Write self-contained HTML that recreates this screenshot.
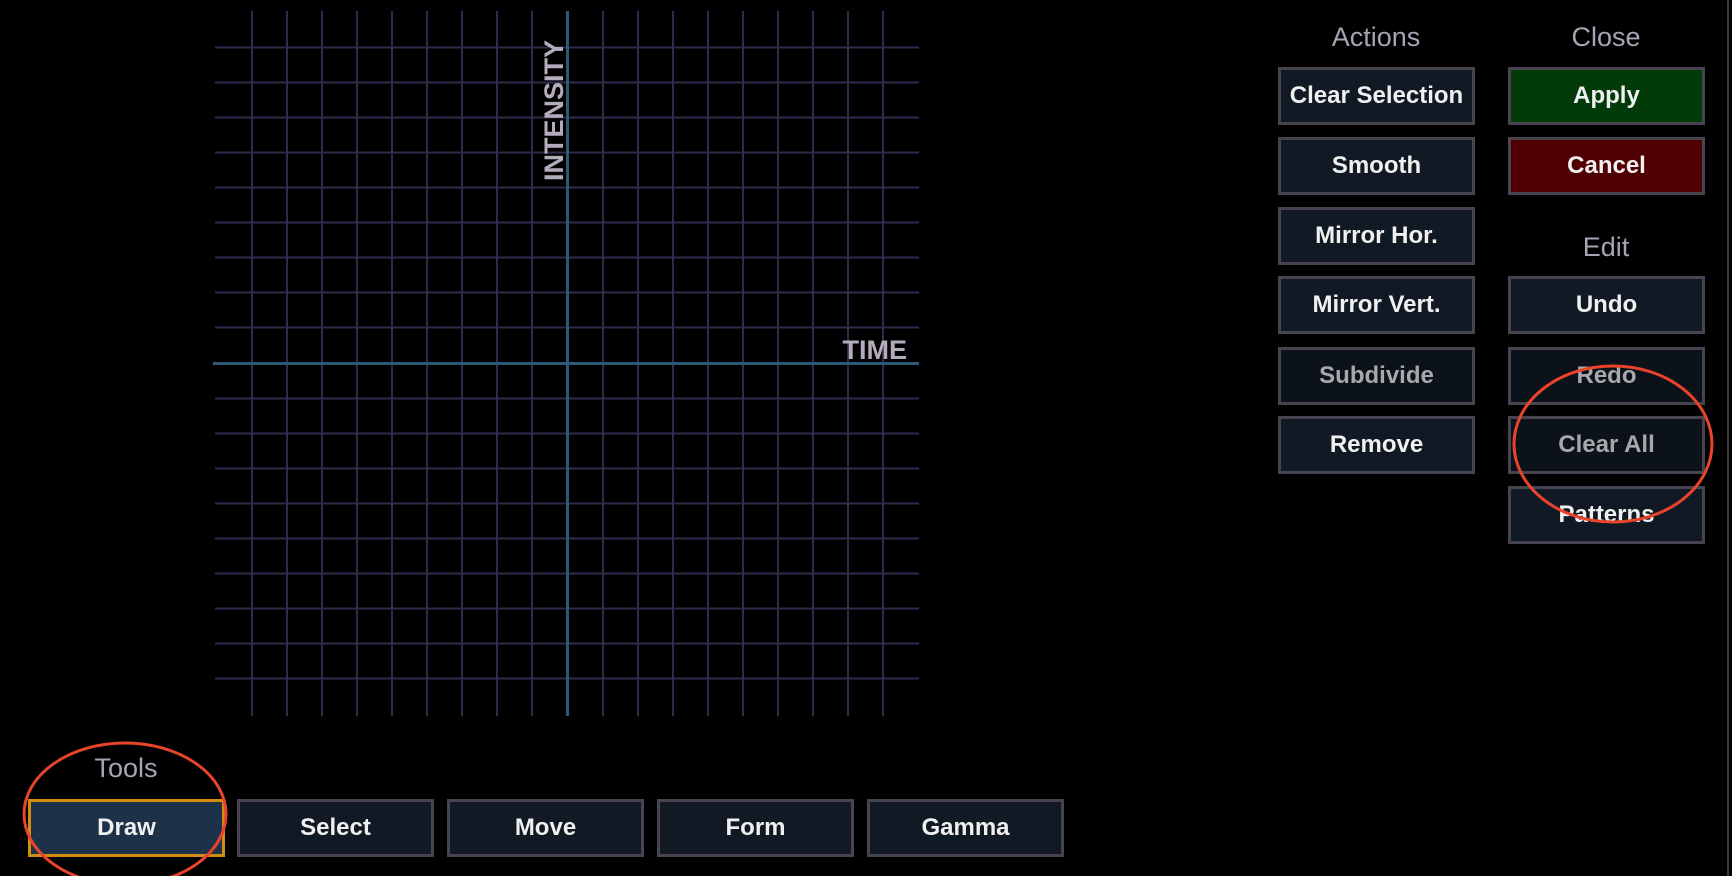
<!DOCTYPE html>
<html><head><meta charset="utf-8"><style>
body{margin:0;width:1732px;height:876px;background:#000;overflow:hidden;position:relative;font-family:"Liberation Sans",sans-serif}
.b{position:absolute;box-sizing:border-box;width:197px;height:58px;background:#111a24;border:3px solid #48444f;color:#f0f0f0;font-weight:bold;font-size:24px;display:flex;align-items:center;justify-content:center}
.t{position:absolute;color:#aaa2b2;font-size:27px;text-align:center;width:200px}
.dim{color:#a8a8ac;background:#0c1219}
</style></head><body>
<svg width="1732" height="876" style="position:absolute;left:0;top:0">
<g stroke="#2e2b4c" stroke-width="2">
<script></script>
</g>
<g id="g" stroke="#2e2b4c" stroke-width="2"></g>
<line x1="1728" y1="0" x2="1728" y2="876" stroke="#333" stroke-width="2"/>
</svg>
<svg width="1732" height="876" style="position:absolute;left:0;top:0">
<g stroke="#2e2b4c" stroke-width="2">
<line x1="252" y1="11" x2="252" y2="716"/><line x1="287" y1="11" x2="287" y2="716"/><line x1="322" y1="11" x2="322" y2="716"/><line x1="357" y1="11" x2="357" y2="716"/><line x1="392" y1="11" x2="392" y2="716"/><line x1="427" y1="11" x2="427" y2="716"/><line x1="462" y1="11" x2="462" y2="716"/><line x1="497" y1="11" x2="497" y2="716"/><line x1="532" y1="11" x2="532" y2="716"/><line x1="603" y1="11" x2="603" y2="716"/><line x1="638" y1="11" x2="638" y2="716"/><line x1="673" y1="11" x2="673" y2="716"/><line x1="708" y1="11" x2="708" y2="716"/><line x1="743" y1="11" x2="743" y2="716"/><line x1="778" y1="11" x2="778" y2="716"/><line x1="813" y1="11" x2="813" y2="716"/><line x1="848" y1="11" x2="848" y2="716"/><line x1="883" y1="11" x2="883" y2="716"/>
<line x1="215" y1="47.5" x2="919" y2="47.5"/><line x1="215" y1="82.5" x2="919" y2="82.5"/><line x1="215" y1="117.5" x2="919" y2="117.5"/><line x1="215" y1="152.5" x2="919" y2="152.5"/><line x1="215" y1="187.5" x2="919" y2="187.5"/><line x1="215" y1="222.5" x2="919" y2="222.5"/><line x1="215" y1="257.5" x2="919" y2="257.5"/><line x1="215" y1="292.5" x2="919" y2="292.5"/><line x1="215" y1="327.5" x2="919" y2="327.5"/><line x1="215" y1="398.5" x2="919" y2="398.5"/><line x1="215" y1="433.5" x2="919" y2="433.5"/><line x1="215" y1="468.5" x2="919" y2="468.5"/><line x1="215" y1="503.5" x2="919" y2="503.5"/><line x1="215" y1="538.5" x2="919" y2="538.5"/><line x1="215" y1="573.5" x2="919" y2="573.5"/><line x1="215" y1="608.5" x2="919" y2="608.5"/><line x1="215" y1="643.5" x2="919" y2="643.5"/><line x1="215" y1="678.5" x2="919" y2="678.5"/>
</g>
<g stroke="#2d5878" stroke-width="3">
<line x1="567.5" y1="11" x2="567.5" y2="716"/><line x1="213" y1="363.5" x2="919" y2="363.5"/>
</g>
<text x="907" y="359" fill="#b4acbc" font-size="27" font-weight="bold" text-anchor="end" font-family="Liberation Sans">TIME</text>
<text transform="translate(563,181) rotate(-90)" fill="#b4acbc" font-size="27" font-weight="bold" font-family="Liberation Sans">INTENSITY</text>
</svg>
<div class="t" style="left:1276px;top:22px">Actions</div>
<div class="t" style="left:1506px;top:22px">Close</div>
<div class="t" style="left:1506px;top:232px">Edit</div>
<div class="t" style="left:26px;top:753px">Tools</div>
<div class="b" style="left:1278px;top:67px">Clear Selection</div>
<div class="b" style="left:1278px;top:137px">Smooth</div>
<div class="b" style="left:1278px;top:207px">Mirror Hor.</div>
<div class="b" style="left:1278px;top:276px">Mirror Vert.</div>
<div class="b dim" style="left:1278px;top:347px">Subdivide</div>
<div class="b" style="left:1278px;top:416px">Remove</div>
<div class="b" style="left:1508px;top:67px;background:#023a0a">Apply</div>
<div class="b" style="left:1508px;top:137px;background:#500003">Cancel</div>
<div class="b" style="left:1508px;top:276px">Undo</div>
<div class="b dim" style="left:1508px;top:347px">Redo</div>
<div class="b dim" style="left:1508px;top:416px">Clear All</div>
<div class="b" style="left:1508px;top:486px">Patterns</div>
<div class="b" style="left:28px;top:799px;background:#1d3248;border-color:#d28c12">Draw</div>
<div class="b" style="left:237px;top:799px">Select</div>
<div class="b" style="left:447px;top:799px">Move</div>
<div class="b" style="left:657px;top:799px">Form</div>
<div class="b" style="left:867px;top:799px">Gamma</div>
<svg width="1732" height="876" style="position:absolute;left:0;top:0">
<line x1="1728" y1="0" x2="1728" y2="876" stroke="#3a3a3a" stroke-width="2"/>
<ellipse cx="1613" cy="444" rx="99" ry="78" fill="none" stroke="#e8432b" stroke-width="3"/>
<ellipse cx="125" cy="814" rx="101" ry="71" fill="none" stroke="#e8432b" stroke-width="3"/>
</svg>
</body></html>
